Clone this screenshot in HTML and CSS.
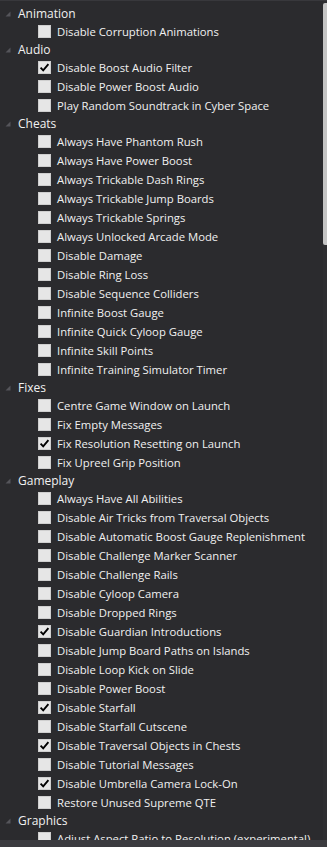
FILE: index.html
```html
<!DOCTYPE html>
<html>
<head>
<meta charset="utf-8">
<link rel="stylesheet" href="styles.css">
</head>
<body>
<div class="window">
  <div class="viewport">
    <div class="tree" id="tree"></div>
  </div>
  <div class="vscroll"><div class="thumb"></div></div>
  <div class="hbar"></div>
</div>
<script src="app.js"></script>
</body>
</html>
```
FILE: app.js
```js
var data = [
  ["Animation", [["Disable Corruption Animations", 0]]],
  ["Audio", [["Disable Boost Audio Filter", 1], ["Disable Power Boost Audio", 0], ["Play Random Soundtrack in Cyber Space", 0]]],
  ["Cheats", [["Always Have Phantom Rush", 0], ["Always Have Power Boost", 0], ["Always Trickable Dash Rings", 0], ["Always Trickable Jump Boards", 0], ["Always Trickable Springs", 0], ["Always Unlocked Arcade Mode", 0], ["Disable Damage", 0], ["Disable Ring Loss", 0], ["Disable Sequence Colliders", 0], ["Infinite Boost Gauge", 0], ["Infinite Quick Cyloop Gauge", 0], ["Infinite Skill Points", 0], ["Infinite Training Simulator Timer", 0]]],
  ["Fixes", [["Centre Game Window on Launch", 0], ["Fix Empty Messages", 0], ["Fix Resolution Resetting on Launch", 1], ["Fix Upreel Grip Position", 0]]],
  ["Gameplay", [["Always Have All Abilities", 0], ["Disable Air Tricks from Traversal Objects", 0], ["Disable Automatic Boost Gauge Replenishment", 0], ["Disable Challenge Marker Scanner", 0], ["Disable Challenge Rails", 0], ["Disable Cyloop Camera", 0], ["Disable Dropped Rings", 0], ["Disable Guardian Introductions", 1], ["Disable Jump Board Paths on Islands", 0], ["Disable Loop Kick on Slide", 0], ["Disable Power Boost", 0], ["Disable Starfall", 1], ["Disable Starfall Cutscene", 0], ["Disable Traversal Objects in Chests", 1], ["Disable Tutorial Messages", 0], ["Disable Umbrella Camera Lock-On", 1], ["Restore Unused Supreme QTE", 0]]],
  ["Graphics", [["Adjust Aspect Ratio to Resolution (experimental)", 0]]]
];
var check = '<svg class="tick" viewBox="0 0 13 13" width="13" height="13"><path d="M2.6 6.6 L5.2 9.3 L10.4 3.2" fill="none" stroke="#000" stroke-width="1.9"/></svg>';
var arrow = '<svg class="arrow" viewBox="0 0 6 6" width="6" height="6"><path d="M5.5 0.5 L5.5 5.5 L0.5 5.5 Z" fill="#55555a"/></svg>';
var html = "";
data.forEach(function (g) {
  html += '<div class="group"><div class="cat">' + arrow + '<span class="cat-label">' + g[0] + '</span></div><div class="items">';
  g[1].forEach(function (it) {
    html += '<div class="item"><span class="cb">' + (it[1] ? check : "") + '</span><span class="label">' + it[0] + '</span></div>';
  });
  html += '</div></div>';
});
document.getElementById("tree").innerHTML = html;
```
FILE: styles.css
```css
html, body {
  margin: 0;
  padding: 0;
  background: #2b2b2e;
}
body {
  font-family: "Open Sans", "Noto Sans", sans-serif;
  font-size: 11.3px;
  color: #f1f1f1;
}
.window {
  width: 327px;
  height: 847px;
  display: grid;
  grid-template-columns: 1fr 4px;
  grid-template-rows: 840px 7px;
  overflow: hidden;
}
.viewport {
  overflow: hidden;
  border-top: 1px solid #38383c;
  padding-top: 4px;
}
.vscroll {
  border-top: 1px solid #38383c;
  background: #2e2e31;
}
.thumb {
  margin-top: 2px;
  height: 242px;
  background: #c5c5c5;
  border-radius: 2px 0 0 2px;
}
.hbar {
  grid-column: 1 / span 2;
  background: #3b3b3f;
}
.cat {
  height: 17px;
  display: flex;
  align-items: center;
  padding-left: 5px;
  font-size: 12px;
}
.arrow {
  display: block;
  margin-top: 1px;
  margin-right: 7px;
}
.cat-label {
  white-space: nowrap;
}
.item {
  height: 19px;
  display: flex;
  align-items: center;
  padding-left: 38px;
  white-space: nowrap;
}
.cb {
  width: 13px;
  height: 13px;
  box-sizing: border-box;
  background: #e6e6e6;
  border: 1px solid #cfcfcf;
  margin-right: 6px;
  flex: none;
}
.tick {
  display: block;
  margin: -1px;
}
```
